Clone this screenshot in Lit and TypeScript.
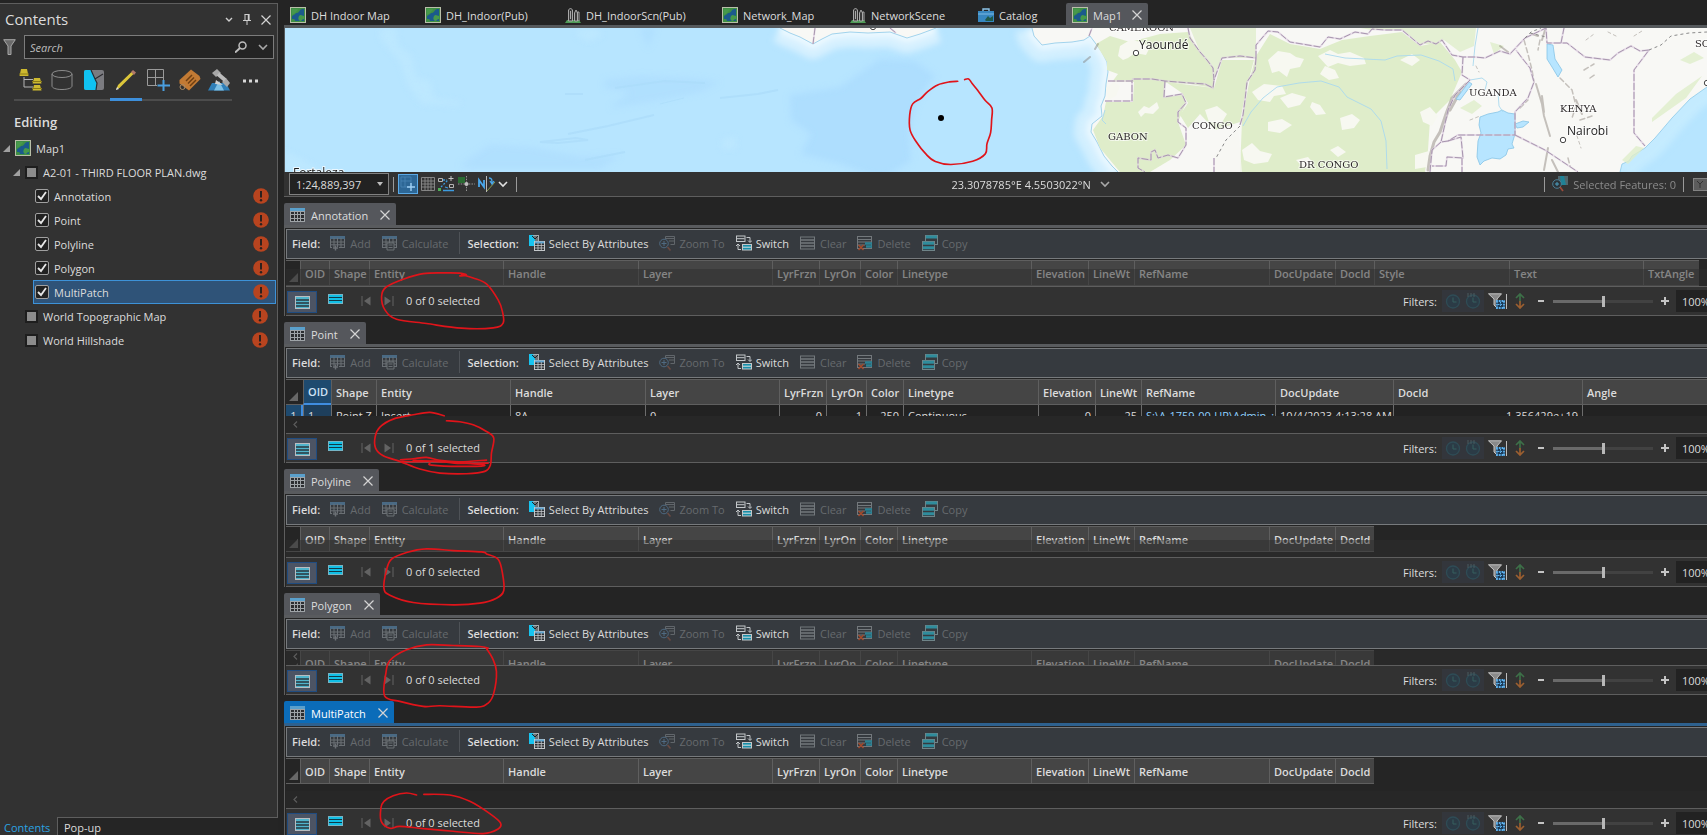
import { LitElement, html, svg, css, nothing, TemplateResult } from "lit";
import { customElement, property } from "lit/decorators.js";
import { classMap } from "lit/directives/class-map.js";
import { styleMap } from "lit/directives/style-map.js";

type Point = [number, number];

/** Smooth open curve through a list of points. */
function curve(flat: number[]): string {
  const p: Point[] = [];
  for (let i = 0; i < flat.length; i += 2) p.push([flat[i], flat[i + 1]]);
  let d = `M${p[0][0]} ${p[0][1]}`;
  for (let i = 0; i < p.length - 1; i++) {
    const a = p[Math.max(i - 1, 0)];
    const b = p[i];
    const c = p[i + 1];
    const e = p[Math.min(i + 2, p.length - 1)];
    const c1 = [b[0] + (c[0] - a[0]) / 6, b[1] + (c[1] - a[1]) / 6];
    const c2 = [c[0] - (e[0] - b[0]) / 6, c[1] - (e[1] - b[1]) / 6];
    d += `C${c1[0].toFixed(1)} ${c1[1].toFixed(1)} ${c2[0].toFixed(1)} ${c2[1].toFixed(1)} ${c[0]} ${c[1]}`;
  }
  return d;
}

const icon = (w: number, h: number, body: unknown) =>
  html`<svg width=${w} height=${h} viewBox="0 0 ${w} ${h}" fill="none" aria-hidden="true">${body}</svg>`;

const mapIcon = () => icon(16, 16, svg`
  <rect x=".5" y=".5" width="15" height="15" fill="#3f8f45" stroke="#b9bfa9"/>
  <path d="M2 9c3-1 3-3 5-3s2-3 5-4h2v12H5c0-2-1-2-3-2z" fill="#1b5a8c"/>
  <path d="M2 2h6c0 2-2 2-2 3S3 7 2 8zM9 9c2-2 3 0 5 0v3c-2 0-2 2-4 2-2-1-2-3-1-5z" fill="#47994b"/>`);

const sceneIcon = () => icon(16, 16, svg`
  <path d="M2 13h12l2 3H0z" fill="#4e9b57"/>
  <path d="M3.500 14V3l2-2 2 2v11zM9.500 14V6l1.500-3 1.500 3v8z" stroke="#a8a8a8" fill="#3a3a3a"/>
  <path d="M5.500 4v8M12.500 14V5h1.500v9" stroke="#a8a8a8"/>`);

const catalogIcon = () => icon(16, 14, svg`
  <path d="M5 3V1h6v2" stroke="#8cc3e8" stroke-width="1.400"/>
  <rect y="3" width="16" height="11" fill="#3787c0"/>
  <path d="M0 6h16" stroke="#7db9e2"/>
  <path d="M7 12l3-4 2 2 3-2v5H8z" fill="#1f5a4a"/>`);

const closeIcon = () => icon(10, 10, svg`<path d="M.5.5l9 9M9.500.5l-9 9" stroke="#d4d4d4" stroke-width="1.200"/>`);

const tableIcon = () => icon(15, 14, svg`
  <rect width="15" height="14" fill="#9ea3a7"/><rect width="15" height="3" fill="#5aa0cc"/>
  <path d="M1 4h3v2H1zM5 4h2v2H5zM8 4h2v2H8zM11 4h3v2h-3zM1 7h3v3H1zM5 7h2v3H5zM8 7h2v3H8zM11 7h3v3h-3zM1 11h3v2H1zM5 11h2v2H5zM8 11h2v2H8zM11 11h3v2h-3z" fill="#2c2e31"/>`);

const chevron = (c: string) => icon(10, 7, svg`<path d="M1 1l4 4 4-4" stroke=${c} stroke-width="1.600"/>`);

const gridGlyph = svg`
  <rect x=".5" y="1.500" width="14" height="11" stroke="#6b7075"/>
  <path d="M0 2.500h15" stroke="#4a6a84" stroke-width="3"/>
  <path d="M.5 7h14M.5 9.800h14M4 3v9.500M7.500 3v9.500M11 3v9.500" stroke="#6b7075"/>`;

const addIcon = () => icon(16, 16, svg`${gridGlyph}<path d="M2 12h7v4H2z" fill="#363a3f"/><path d="M5.500 10.500v5M3 13h5" stroke="#6b7075" stroke-width="1.500"/>`);
const calcIcon = () => icon(16, 16, svg`${gridGlyph}<path d="M5 8h7v7H5z" fill="#363a3f" stroke="#6b7075"/><path d="M6.500 10h4M6.500 12.500h4" stroke="#6b7075"/>`);

const selectAttrIcon = () => icon(16, 16, svg`
  <rect x=".5" y=".5" width="9" height="10" fill="#6f7377" stroke="#a9adb0"/>
  <path d="M0 0h4l2 5v6H0z" fill="#17c4f0"/>
  <path d="M3 1l3 3 3-3" stroke="#222"/>
  <rect x="5.500" y="6.500" width="10" height="9" fill="#2d3034" stroke="#c3c7ca"/>
  <path d="M6 7.500h9" stroke="#5fa3cf" stroke-width="2"/>
  <path d="M6 10.500h9M6 13h9M9 8v7M12.300 8v7" stroke="#c3c7ca" stroke-width=".8"/>`);

const zoomToIcon = () => icon(16, 16, svg`
  <path d="M6.500 4V1.500h9v8h-4" stroke="#61666b"/><path d="M7 3.500h8M10 6h5" stroke="#61666b"/>
  <circle cx="5" cy="8.500" r="4.300" stroke="#4f6a82" fill="#363a3f"/>
  <path d="M5 6v5M2.500 8.500h5" stroke="#4f6a82"/><path d="M8.500 12l3 3.500" stroke="#6b4a42" stroke-width="1.500"/>`);

const switchIcon = () => icon(16, 16, svg`
  <rect x=".5" y="1" width="8.500" height="5.500" stroke="#c3c7ca"/><path d="M1 3.700h7.500" stroke="#c3c7ca"/>
  <rect x="6.500" y="9.500" width="9" height="5.500" fill="#178ea8" stroke="#c3c7ca"/><path d="M7 12.200h8" stroke="#e0e0e0"/>
  <path d="M10.500 2.500H14v4.500M12 5.500l2 2 2-2M5 14.500H2V9.500M0 11l2-2 2 2" stroke="#c3c7ca"/>`);

const clearIcon = () => icon(16, 14, svg`<rect x=".5" y="1" width="14" height="12" stroke="#73787c"/><path d="M1 4h14M1 7h14M1 10h14" stroke="#73787c" stroke-width="1.400"/>`);

const deleteIcon = () => icon(16, 16, svg`<rect x=".5" y="1.500" width="14" height="12" stroke="#73787c"/>
  <path d="M1 4.500h14M1 7h14M1 10h7" stroke="#73787c" stroke-width="1.200"/><path d="M8 8.500h7M9 11.500h6" stroke="#2a8194" stroke-width="2.400"/>
  <path d="M1.500 10l5 5M6.500 10l-5 5" stroke="#a34a2c" stroke-width="1.500"/>`);

const copyIcon = () => icon(16, 16, svg`<rect x="3.500" y=".5" width="12" height="9" stroke="#6f8488"/><path d="M4 2h11" stroke="#2f8c9c" stroke-width="3"/>
  <rect x=".5" y="6.500" width="12" height="9" fill="#363a3f" stroke="#6f8488"/><path d="M1 8.300h11M1 12.700h11" stroke="#2f8c9c" stroke-width="3"/>`);

const allRowsIcon = () => icon(15, 13, svg`<rect x=".5" y=".5" width="14" height="12" fill="#50b4cc" stroke="#b8bcc0"/>
  <path d="M1 4h13M1 7h13M1 10h13" stroke="#27343c" stroke-width="1.500"/>`);
const selectedRowsIcon = () => icon(15, 10, svg`<rect x=".5" y=".5" width="14" height="9" fill="#10bfe6" stroke="#76b4c4"/>
  <path d="M1 3.500h13M1 6.500h13" stroke="#103a48"/>`);
const firstIcon = () => icon(10, 10, svg`<path d="M1 0v10" stroke="#636363"/><path d="M9.500.5v9L3 5z" fill="#636363"/>`);
const lastIcon = () => icon(10, 10, svg`<path d="M9 0v10" stroke="#636363"/><path d="M.5.5v9L7 5z" fill="#636363"/>`);

const clockIcon = (ticks: boolean) => icon(16, 16, svg`<circle cx="8" cy="8.500" r="6.500" fill="#2b3b46" stroke="#2f4c56" stroke-width="1.300"/>
  <path d="M8 4.500V9h3.500" stroke="#37605f"/>${ticks ? svg`<path d="M3 0v4M6 0v4M9 0v4" stroke="#4a5a5e"/>` : nothing}`);

const funnelGridIcon = () => icon(19, 16, svg`<path d="M.5.8h13L9 6v9l-3-3V6z" fill="#8a8a8a" stroke="#c4c4c4"/>
  <rect x="8" y="7" width="9" height="9" fill="#1c3c58"/>
  <path d="M8 8h9M8 15h9M9 8v8M16 8v8" stroke="#5fb0ea" stroke-width="1.800" stroke-dasharray="1.800 1"/>
  <path d="M12.500 9v5M10 11.500h5" stroke="#5fb0ea" stroke-dasharray="1.500 1"/>
  <path d="M18.500 1v15" stroke="#bdbdbd"/>`);

const rangeIcon = () => icon(10, 16, svg`<path d="M5 8V1.500M1 5l4-4 4 4" stroke="#3d7048" stroke-width="1.700"/>
  <path d="M5 8v6.500M1 11l4 4 4-4" stroke="#9c5f30" stroke-width="1.700"/>`);

const errorIcon = () => icon(16, 16, svg`<circle cx="8" cy="8" r="7.800" fill="#b8441f"/><path d="M8 3v6.500" stroke="#2c211e" stroke-width="2"/><circle cx="8" cy="12.200" r="1.200" fill="#2c211e"/>`);
const caretIcon = () => icon(7, 7, svg`<path d="M7 0v7H0z" fill="#a0a0a0"/>`);

/* Contents pane list modes */
const modeIcons: [string, () => TemplateResult][] = [
  ["List by drawing order", () => icon(23, 22, svg`
    <path d="M5 8v10h9M5 10.500h9" stroke="#b4b4b4"/>
    <path d="M2 0h6l1.500 7H.5zM15 9h6l1.500 5.500h-9zM15 16h6l1.500 5.500h-9z" fill="#cdb92f"/>
    <path d="M0 5h10M13 12.500h10M13 19.500h10" stroke="#8d7d18"/>`)],
  ["List by data source", () => icon(22, 20, svg`
    <path d="M1 4v12c0 2 4 3.500 10 3.500S21 18 21 16V4" stroke="#8c8c8c"/><ellipse cx="11" cy="4" rx="10" ry="3.500" stroke="#8c8c8c"/>`)],
  ["List by selection", () => icon(20, 20, svg`
    <rect width="20" height="20" rx="2" fill="#7b7b80"/><path d="M2 0h5l6 12-1 8H2a2 2 0 0 1-2-2V2a2 2 0 0 1 2-2z" fill="#10c2f2"/>
    <path d="M7 0l4 9 8-5M11 9l2 4-1 7" stroke="#2c2c30" stroke-width="1.200"/>`)],
  ["List by editing", () => icon(20, 20, svg`
    <path d="M0 20l2-5L15.500 2l2 2L4 17.500z" fill="#dcc63a"/><path d="M15 2l2-2 3 2.500L18 5z" fill="#b0786a"/>
    <path d="M0 20l1-3 2 2z" fill="#ddd"/>`)],
  ["List by snapping", () => icon(23, 22, svg`
    <path d="M.5.5h16v16H.5zM8.500.5v16M.5 8.500h16" stroke="#9a9a9a"/>
    <path d="M10 16.500h13M16.500 11v11" stroke="#323232" stroke-width="4"/>
    <path d="M10.500 16.500H23M16.500 11v11" stroke="#4a9fe0" stroke-width="2"/>`)],
  ["List by labeling", () => icon(22, 22, svg`
    <path d="M12 .5L20.500 7l1 3L10 21.500.5 14.500V11z" fill="#c27a34"/><path d="M7 12l6-6M9 14.500l6-6M11 17l6-6" stroke="#6f3f12" stroke-width="1.500"/>
    <circle cx="3.500" cy="18" r="2.500" stroke="#a88a66"/>`)],
  ["List by perspective imagery", () => icon(22, 22, svg`
    <path d="M4 14h14l4 7.500H0z" fill="#2f7fb8"/><path d="M11 12l5 9.500H6z" fill="#7cc0e6"/>
    <path d="M4 4l5-4 4 4-5 4zM14 13l4-4 4 5-3 4z" fill="#a6a6a6"/><path d="M8 11l7 5-8-1z" fill="#cfcfcf"/><path d="M10 5l7 6" stroke="#bcbcbc" stroke-width="4"/>`)],
];

interface Column { name: string; width: number; value?: string; align?: "right" | "link" }

const base: [string, number][] = [
  ["OID", 29], ["Shape", 40], ["Entity", 134], ["Handle", 135], ["Layer", 134], ["LyrFrzn", 47], ["LyrOn", 41], ["Color", 37],
  ["Linetype", 134], ["Elevation", 57], ["LineWt", 46], ["RefName", 135], ["DocUpdate", 66], ["DocId", 39],
];
const toColumns = (c: [string, number][]): Column[] => c.map(([name, width]) => ({ name, width }));
const baseColumns = toColumns(base);
const annotationColumns = toColumns([...base, ["Style", 135], ["Text", 134], ["TxtAngle", 56]]);
const pointColumns: Column[] = [
  { name: "OID", width: 28, value: "1" },
  { name: "Shape", width: 45, value: "Point Z" },
  { name: "Entity", width: 134, value: "Insert" },
  { name: "Handle", width: 135, value: "8A" },
  { name: "Layer", width: 134, value: "0" },
  { name: "LyrFrzn", width: 47, value: "0", align: "right" },
  { name: "LyrOn", width: 40, value: "1", align: "right" },
  { name: "Color", width: 37, value: "250", align: "right" },
  { name: "Linetype", width: 135, value: "Continuous" },
  { name: "Elevation", width: 57, value: "0", align: "right" },
  { name: "LineWt", width: 46, value: "25", align: "right" },
  { name: "RefName", width: 134, value: "S:\\A-1759-00-UP\\Admin_:", align: "link" },
  { name: "DocUpdate", width: 118, value: "10/4/2023 4:13:28 AM" },
  { name: "DocId", width: 189, value: "1.356429e+19", align: "right" },
  { name: "Angle", width: 134, value: "" },
];

interface TableView { name: string; columns: Column[]; height: number; overlap?: boolean; arrow?: boolean; total: number; active?: boolean; row?: boolean }
const tables: TableView[] = [
  { name: "Annotation", columns: annotationColumns, height: 26, overlap: true, total: 0 },
  { name: "Point", columns: pointColumns, height: 54, total: 1, arrow: true, row: true },
  { name: "Polyline", columns: baseColumns, height: 31, overlap: true, total: 0 },
  { name: "Polygon", columns: baseColumns, height: 15, overlap: true, total: 0, arrow: true },
  { name: "MultiPatch", columns: baseColumns, height: 50, total: 0, arrow: true, active: true },
];

const shared = css`
  * { box-sizing: border-box; }
  svg { display: block; flex: none; }
  button, select, input {
    font: inherit; color: inherit; background: none; border: 0; padding: 0; margin: 0; border-radius: 0; appearance: none; outline: 0;
  }
  button { display: flex; align-items: center; flex: none; white-space: nowrap; }
`;

@customElement("contents-pane")
class ContentsPane extends LitElement {
  static styles = [shared, css`
    :host { display: flex; flex-direction: column; width: 278px; flex: none; padding-top: 3px; color: #dcdcdc; }
    .pane { flex: 1; background: #323232; border: 1px solid #5e5e5e; border-left: 0; border-bottom: 0; display: flex; flex-direction: column; }
    header { display: flex; align-items: center; height: 31px; padding: 0 6px 0 5px; gap: 10px; }
    h1 { font-size: 15px; font-weight: 400; margin: 0; flex: 1; }
    .search { display: flex; align-items: center; gap: 8px; padding: 0 3px; }
    .box { flex: 1; display: flex; align-items: center; gap: 11px; height: 24px; padding: 0 5px; background: #242424; border: 1px solid #7c7c7c; }
    .box input { flex: 1; min-width: 0; font-style: italic; }
    .box input::placeholder { color: #bdbdbd; opacity: 1; }
    nav { display: flex; height: 42px; margin: 0 0 0 14px; }
    .mode { width: 32px; height: 42px; justify-content: center; border-bottom: 2px solid #4c4c4c; padding-top: 2px; }
    .mode:nth-child(7) { width: 26px; }
    .mode.on { border-bottom: 3px solid #3d8fdb; }
    .more { padding: 2px 11px 0; }
    h2 { font-size: 13px; font-weight: 600; margin: 0; padding: 9px 14px 0; height: 35px; line-height: 24px; }
    .row { display: flex; align-items: center; height: 24px; padding: 0 8px 0 2px; gap: 5px; border: 1px solid transparent; }
    .row > svg:last-child { margin-left: auto; }
    .l1 { padding-left: 12px; }
    .l1b { padding-left: 24px; }
    .l2 { margin-left: 33px; margin-right: 1px; padding: 0 6px 0 1px; }
    .selected { background: #2f5378; border-color: #3d92d8; }
    label { display: flex; align-items: center; gap: 5px; }
    .check { width: 14px; height: 14px; border: 1px solid #a0a0a0; border-radius: 2px; background: #222 center / 10px 10px no-repeat; display: block; }
    .check:checked { background-image: url("data:image/svg+xml,%3Csvg xmlns='http://www.w3.org/2000/svg' viewBox='0 0 10 10'%3E%3Cpath d='M1 5l3 3 5-7' fill='none' stroke='%23e6e6e6' stroke-width='1.800'/%3E%3C/svg%3E"); }
    .part { width: 13px; height: 13px; border: 2px solid #1e1e1e; background: #8c8c8c; }
    .foot { display: flex; height: 18px; align-items: center; background: #323232; }
    .foot button { height: 18px; padding: 2px 5px 0 4px; color: #2ba3e3; width: 57px; }
    .foot .pop { flex: 1; color: #dcdcdc; border: 1px solid #5e5e5e; border-width: 1px 0 0 1px; background: #252525; padding-left: 6px; }
  `];

  render() {
    return html`
      <div class="pane">
        <header>
          <h1>Contents</h1>
          <button aria-label="Options">${icon(8, 6, svg`<path d="M1 1l3 3 3-3" stroke="#cfcfcf" stroke-width="1.400"/>`)}</button>
          <button aria-label="Auto hide">${icon(8, 11, svg`<path d="M1.500.5h5M2 .5v6M6 .5v6M0 6.500h8M4 7v4" stroke="#cfcfcf"/><path d="M5.500 1v5" stroke="#cfcfcf" stroke-width="1.500"/>`)}</button>
          <button aria-label="Close">${closeIcon()}</button>
        </header>
        <div class="search">
          <button aria-label="Filter">${icon(13, 16, svg`<path d="M.7.7h11.600L8 7v8.500H5V7z" fill="#6a6a6a" stroke="#a8a8a8"/>`)}</button>
          <div class="box">
            <input type="text" placeholder="Search" aria-label="Search" />
            <button aria-label="Search">${icon(12, 12, svg`<circle cx="7.500" cy="4.500" r="3.500" stroke="#bdbdbd" stroke-width="1.500"/><path d="M5 7l-5 4.500" stroke="#bdbdbd" stroke-width="2"/>`)}</button>
            <button aria-label="Search options">${chevron("#a8a8a8")}</button>
          </div>
        </div>
        <nav>
          ${modeIcons.map(([label, draw], i) => html`<button class=${classMap({ mode: true, on: i === 3 })} aria-label=${label}>${draw()}</button>`)}
          <button class="more" aria-label="More">${icon(16, 4, svg`<path d="M0 .5h3v3H0zM6 .5h3v3H6zM12 .5h3v3h-3z" fill="#d8d8d8"/>`)}</button>
        </nav>
        <h2>Editing</h2>
        <div class="row">${caretIcon()}${mapIcon()}<span>Map1</span></div>
        <div class="row l1">${caretIcon()}<label><input type="checkbox" class="part" />A2-01 - THIRD FLOOR PLAN.dwg</label></div>
        ${["Annotation", "Point", "Polyline", "Polygon", "MultiPatch"].map((n) => html`
          <div class=${classMap({ row: true, l2: true, selected: n === "MultiPatch" })}>
            <label><input type="checkbox" class="check" checked />${n}</label>${errorIcon()}
          </div>`)}
        ${["World Topographic Map", "World Hillshade"].map((n) => html`
          <div class="row l1b"><label><input type="checkbox" class="part" />${n}</label>${errorIcon()}</div>`)}
      </div>
      <div class="foot"><button>Contents</button><button class="pop">Pop-up</button></div>
    `;
  }
}

@customElement("map-view")
class MapView extends LitElement {
  static styles = [shared, css`
    :host { display: block; color: #dcdcdc; }
    .tabs { display: flex; align-items: flex-end; height: 25px; padding-left: 6px; }
    .tab { display: flex; align-items: center; gap: 5px; height: 22px; padding-top: 2px; flex: none; }
    .open { background: #55575c; padding: 2px 6px 0; border-radius: 2px 2px 0 0; }
    .open .x { margin-left: 5px; }
    .frame { border-top: 3px solid #55595c; border-left: 1px solid #55595c; }
    .map { width: 100%; height: 144px; }
    .land { font-family: "DejaVu Serif", serif; font-size: 10px; fill: #2c2829; stroke: #fff; stroke-width: 2px; paint-order: stroke; stroke-opacity: .6; }
    .city { font-family: "Open Sans", sans-serif; font-size: 12px; fill: #1c1c1c; stroke: #fff; stroke-width: 2px; paint-order: stroke; stroke-opacity: .7; }
    .status { display: flex; align-items: center; height: 25px; padding: 0 0 0 5px; background: #323232; border-bottom: 1px solid #5e5e5e; }
    .scale { display: flex; align-items: center; }
    .scale select { width: 100px; height: 22px; padding: 0 6px; background: #222; border: 1px solid #808080; }
    .scale svg { margin: 0 6px 0 -12px; pointer-events: none; position: relative; }
    .bar { width: 1px; height: 15px; background: #9a9a9a; flex: none; }
    .tools { display: flex; align-items: center; gap: 3px; margin: 0 8px 0 4px; }
    .on { background: #2d6796; border: 1px solid #5aa9e6; width: 20px; height: 20px; justify-content: center; margin-left: 1px; }
    .coords { display: flex; align-items: center; gap: 9px; margin: 0 auto; }
    .features { display: flex; align-items: center; gap: 4px; margin: 0 7px; color: #8b8b8b; }
    .pause { margin: 0 0 0 9px; width: 14px; overflow: hidden; }
  `];

  render() {
    const tabs: [string, number, () => TemplateResult][] = [
      ["DH Indoor Map", 135, mapIcon], ["DH_Indoor(Pub)", 140, mapIcon], ["DH_IndoorScn(Pub)", 157, sceneIcon],
      ["Network_Map", 128, mapIcon], ["NetworkScene", 128, sceneIcon], ["Catalog", 88, catalogIcon],
    ];
    return html`
      <div class="tabs">
        ${tabs.map(([name, width, draw]) => html`<button class="tab" style=${styleMap({ width: `${width}px` })}>${draw()}<span>${name}</span></button>`)}
        <div class="tab open">${mapIcon()}<span>Map1</span><button class="x" aria-label="Close Map1">${closeIcon()}</button></div>
      </div>
      <div class="frame">${this.map()}</div>
      <div class="status">
        <label class="scale"><select aria-label="Map scale"><option>1:24,889,397</option></select>
          ${icon(6, 4, svg`<path d="M0 0h6L3 4z" fill="#bdbdbd"/>`)}</label>
        <div class="tools">
          <i class="bar"></i>
          <button class="on" aria-label="Constraint">${icon(16, 16, svg`<path d="M1 1h10v10H1zM1 5h10M5 1v10" stroke="#4a86b5" stroke-width=".8"/><path d="M7 11h8M11 7v8" stroke="#9fd0f5" stroke-width="1.400"/>`)}</button>
          <button aria-label="Grid">${icon(14, 14, svg`<path d="M.5.5h13v13H.5zM4 0v14M7 0v14M10 0v14M0 4h14M0 7h14M0 10h14" stroke="#8c8c8c" stroke-width=".9"/>`)}</button>
          <button aria-label="Snapping">${icon(17, 16, svg`<path d="M.5 2.500h4v3h-4zM11.500 8.500h4v3h-4z" stroke="#b4b4b4"/><path d="M13 0v5M10.500 2.500h5" stroke="#c4c4c4"/><path d="M5 4h4M3 11l7-7" stroke="#3d9be0" stroke-width="1.300" stroke-dasharray="2 1.500"/><path d="M5 14.500h11M7 11l3 1" stroke="#3d9be0" stroke-width="1.300"/><rect y="12" width="3" height="3" fill="#4fae56"/>`)}</button>
          <button aria-label="Inference">${icon(17, 16, svg`<rect width="7" height="6" y="1" fill="#2a6b32"/><path d="M0 8h17M8.500 0v16" stroke="#949494" stroke-dasharray="1.500 1.200"/><circle cx="8.500" cy="8" r="2" fill="#c0c0c0"/>`)}</button>
          <button aria-label="Ground to grid">${icon(17, 16, svg`<path d="M1 11V4l5 7V4" stroke="#49a7ea" stroke-width="1.800"/><path d="M8.500 0v16" stroke="#b8b8b8"/><path d="M9 15l8-9" stroke="#8a9a50"/><path d="M11 2c3 0 3 2 3 5M12 5l2 3 2-3" stroke="#49a7ea" stroke-width="1.300"/>`)}</button>
          <button aria-label="More tools">${chevron("#e0e0e0")}</button>
        </div>
        <i class="bar"></i>
        <button class="coords"><span>23.3078785°E 4.5503022°N</span>${chevron("#a8a8a8")}</button>
        <i class="bar"></i>
        <button class="features">${icon(17, 16, svg`<path d="M6 0h10v9H6z" fill="#50666c"/><path d="M8 0h4l2 9h-5z" fill="#1f8296"/><circle cx="5" cy="8" r="4.300" stroke="#4d7f95" fill="#2b3338"/><path d="M5 6v4M3 8h4" stroke="#4d9fc0"/><path d="M8 11l3 4" stroke="#9c4b3a" stroke-width="1.700"/>`)}<span>Selected Features: 0</span></button>
        <i class="bar"></i>
        <button class="pause" aria-label="Pause drawing">${icon(14, 13, svg`<rect x=".5" y=".5" width="14" height="12" fill="#5c5c5c" stroke="#848484"/><path d="M4 3l3 3v4M10 3L7 6" stroke="#333"/>`)}</button>
      </div>
    `;
  }

  map() {
    const coast = "M1032 28L1034 36L1042 45L1055 43L1072 42L1084 40L1090 36L1096 44L1102 52L1107 62L1108 72L1106 84L1105 96L1101 106L1102 116L1092 124L1091 132L1097 142L1104 156L1112 166L1118 172";
    const east = "M1707 87L1690 99L1672 118L1655 138L1645 148L1632 156L1629 161L1622 164L1620 172";
    const gulf = "M780 28L790 33L800 37L813 44L822 39L832 34L850 32L868 33L890 32L907 38L920 34L936 28";
    const borders = [
      "M1188 28L1190 38L1200 52L1207 60L1213 68L1214 80L1222 58L1240 56L1256 58",
      "M1256 58V45L1268 31L1278 32L1290 42L1320 47L1328 37L1340 39L1355 32L1368 34L1372 29L1385 30L1402 30L1420 45L1428 41L1436 44L1442 40L1452 55L1463 57L1475 57L1485 58L1500 51L1510 54L1525 38",
      "M1256 58L1255 70L1247 82L1245 100L1243 115L1240 125",
      "M1108 81H1132L1133 79L1152 79L1165 81L1190 83L1205 84L1213 88L1214 80M1105 101H1132V81M1165 81L1164 97L1182 94L1186 103L1178 112L1178 122L1186 128V145L1178 158L1168 155L1158 158L1155 150L1151 152L1151 160L1138 158L1138 168L1145 172",
      "M1463 57L1462 75L1470 80L1455 95L1448 110L1441 142L1448 141L1458 135H1515V112L1528 98L1534 82L1530 68L1522 58L1516 50",
      "M1515 135L1545 150L1578 172M1525 38L1546 28L1547 43L1567 43L1585 57L1610 60L1618 53L1631 46L1640 51L1649 50L1634 70V133L1645 146M1561 43L1564 28",
      "M1441 142L1432 150L1430 172M1448 141L1461 137L1463 158L1447 157L1446 166L1432 166M1462 158L1462 172",
      "M813 44L815 28M890 28L896 33M1089 36L1092 28", "M1214 158L1214 172",
    ];
    const clearings = "M1138 112l6-6 5 2 8-6 2 6-6 6-8-1-4 4zM1120 46l10-6 12 2 8 5-4 8-11-2-7 5-5 2-5-4zM1106 88l8-6 6 4-4 10-8 4zM1268 60l10-9 12 2 6 4 8 2-4 8-10 2-3 8-8-6-7 2zM1318 56l12-6 8 4 12-2 14 6 2 6-16 2-12-3-10 4zM1325 66l10 4 4 8-10 2-9-6zM1252 92l12-8 18 2 4 8-12 2-4 6-12-2zM1280 98l12-5 14 4-6 8-12 3zM1312 102l8 3 6 9-10 1-6-8zM1340 118l12-4 8 6-6 8-12 2zM1268 122l14-3 10 6-12 8-12-2zM1242 150l10-7 8 8 12 3-4 8-14 2-10-4zM1400 60l12-6 8 6-8 6zM1420 112l10-5 8 9-6 10-9-4zM1415 155l14-4-2 16-12 2zM1330 150l8-4 8 6-8 5zM1296 160l12-3 6 7-10 4zM1205 110l12-4 10 8-6 10-12-2z";
    return html`<svg class="map" viewBox="285 28 1422 144" preserveAspectRatio="xMinYMid slice" role="img" aria-label="Map">
      <defs><filter id="soft" x="-20%" y="-20%" width="140%" height="140%"><feGaussianBlur stdDeviation="3" /></filter></defs>
      <rect x="285" y="28" width="1422" height="144" fill="#b7e5ff" />
      <g fill="#abdcfe" filter="url(#soft)">
        <path d="M790 95l50-8 40-28 35 2 20 15-18 25-8 30 2 30-30 18-40-15-40-10 10-20-20-14z" opacity=".8" />
        <path d="M605 80l35-4 50 2 30 4-20 10-40 8-50 8 20-16-25-4zM460 165l30-20 40 2 50 10 40-2-20 14H470zM640 28h16l-8 20z" opacity=".6" />
      </g>
      <g fill="#bfe9ff" opacity=".7" filter="url(#soft)"><path d="M380 28h16l2 18 14 10 4 22 14 2 4 18 28 4-4 4-36-2-14-18-8-24-12-14-8-10zM576 30l22-2 4 8-14 6-10-6zM285 150l18 10 20 12h-38zM722 139l14-2v12h-14z" /></g>
      <g stroke="#abdcfa" opacity=".7" fill="none"><path d="M568 134l40-8 46-11M540 142l36-4 12 2-30 3zM565 94h18M615 88l50-7 40 2M720 98l38-4 20-4M585 160l40-8" stroke-width="2" /><path d="M660 104l24-6" /></g>
      <g fill="none" stroke-linejoin="round" filter="url(#soft)">
        <path d=${coast} stroke="#d2efff" stroke-width="34" /><path d=${east} stroke="#c4ebff" stroke-width="30" />
        <path d=${gulf} stroke="#d6f0ff" stroke-width="30" /><path d=${coast} stroke="#eaf8ff" stroke-width="10" /><path d=${gulf} stroke="#effaff" stroke-width="8" />
      </g>
      <path d=${gulf + "V20H780Z"} fill="#f8f8f5" />
      <path d=${coast + "L1118 176H1620V172L1622 164L1629 161L1632 156L1645 148L1655 138L1672 118L1690 99L1707 87V20H1032Z"} fill="#f8f8f5" />
      <path d=${coast} stroke="#8dc9e8" stroke-width=".8" fill="none" /><path d=${gulf} stroke="#8dc9e8" stroke-width=".8" fill="none" /><path d=${east} stroke="#8dc9e8" stroke-width=".8" fill="none" />
      <g fill="#dfedca">
        <path d="M1096 44L1110 36L1130 42L1160 34L1188 32L1200 52L1213 68L1214 88L1190 84L1152 82H1112L1118 74L1107 70V62z" />
        <path d="M1190 28H1256V58L1222 58L1214 78L1213 68L1200 52z" opacity=".75" />
        <path d="M1106 102H1133L1134 82L1165 82L1164 97L1182 95L1186 103L1178 122L1186 145L1170 160L1150 172H1120L1100 148L1093 130L1103 116z" />
        <path d="M1166 82L1214 88L1222 60L1254 60L1246 90L1240 122L1215 130L1200 114L1188 128L1180 115L1188 103L1182 93z" />
        <path d="M1256 56L1270 34L1290 44L1320 49L1342 40L1370 36L1402 32L1420 46L1440 42L1455 60L1462 72L1450 100L1430 120L1428 150L1425 172H1240L1242 120L1250 78z" />
        <path d="M1360 28H1476L1474 46L1460 52L1444 40L1436 44L1420 44L1402 30H1372zM1460 108l14-8 8 6-10 8zM1680 60l14-8 10 6-14 6zM1652 118l24-24 26-18-16 22-34 24zM1622 160l14-14 8 2-8 8-8 8zM1490 42l14 4-10 8z" opacity=".8" />
      </g>
      <path d=${clearings} fill="#f7f8f1" />
      <path d="M1214 172v-16l24-28 4 44z" fill="#f6f6f2" opacity=".8" />
      <g fill="none" stroke="#786e66" stroke-linecap="round" opacity=".4">
        <path d="M1466 84l-14 14-6 16-6 18-6 10-4 14-2 14M1460 92l-10 18M1449 108l-4 12" stroke-width="3" />
        <path d="M1536 84l6 20 2 12 6 20M1542 96l2 16M1548 148l-4 22" stroke-width="2" />
        <path d="M1524 40l4 14 4 16 2 12M1560 78l12 12 4 16-4 12M1540 40l-2 10M1580 120l12-4M1520 108l8-8M1568 158l2 8M1584 70l10-6M1590 78l6-4" stroke-width="1.500" stroke-dasharray="5 3" />
        <path d="M1500 46l8 6M1545 30l-3 10M1532 34l6 2M1552 160l6 12M1098 44l-3 5M1090 57l-6 5M1576 100l6 14" stroke-width="2" />
        <path d="M1575 130l6 18M1586 40l8-6M1608 32l8 4M1634 36l8-5M1470 120l10-4M1476 66l3 6" stroke-width="1" stroke-dasharray="3 3" />
      </g>
      <g fill="#b7e5ff" stroke="#86c4e6" stroke-width=".8">
        <path d="M1480 117l8-3 10-2 4-2 6 3 7 1v20l-3 10 2 4-6 1-2 6-6 4-8-1-8 3-4 4-3-8 1-16 3-8-2-8z" />
        <path d="M1515 124l8-3 6 1-6 5-6 1zM1547 44l6 1 2 14 7 11-4 7-6-10-5-8zM1456 99l13-17 3 2-12 16z" />
      </g>
      <g fill="none" stroke="#a9d9ee" stroke-width=".9">
        <path d="M1243 126l8-14 12-14 14-11 22-4 22-2 18 6 8 10 24 12 10 12 5 20 1 28" />
        <path d="M1325 54l20 4 40 2 12-4 24-1 18 6 14 8 2 12M1470 80l12-2 5 4-2 8M1498 92l1 14 4 6M1478 28l-3 18-2 20M1105 110l-3 10 4 4" />
      </g>
      <g fill="none" stroke="#dccbe0" stroke-width="2" opacity=".6">${borders.map((d) => svg`<path d=${d} />`)}</g>
      <g fill="none" stroke="#a796ae" stroke-dasharray="7 2">${borders.map((d) => svg`<path d=${d} />`)}</g>
      <path d="M1649 50l12-5 10-9 18-3 18-1M1525 38l6-6 10-4M1240 126l-14 14-10 18M1530 33l16 4" stroke="#8a8a8a" stroke-dasharray="3 3" fill="none" />
      <g class="land">
        <text x="1109" y="31">CAMEROON</text><text x="1108" y="140">GABON</text><text x="1192" y="129">CONGO</text>
        <text x="1299" y="168">DR CONGO</text><text x="1469" y="96">UGANDA</text><text x="1560" y="112">KENYA</text><text x="1695" y="47">SO</text>
      </g>
      <g class="city"><text x="1139" y="49">Yaoundé</text><text x="1567" y="135">Nairobi</text><text x="293" y="177">Fortaleza</text></g>
      <g fill="#fff" stroke="#444"><circle cx="1136" cy="53" r="2.700" /><circle cx="1563" cy="140" r="2.700" /><circle cx="1707" cy="83" r="2.700" /><circle cx="873" cy="27" r="2.700" /></g>
      <circle cx="941" cy="118" r="3" fill="#000" />
    </svg>`;
  }
}

@customElement("table-dock")
class TableDock extends LitElement {
  @property({ attribute: false }) view!: TableView;

  static styles = [shared, css`
    :host { display: block; color: #dcdcdc; }
    .tab { display: inline-flex; align-items: center; gap: 6px; height: 22px; padding: 2px 6px 0; background: #55575c; border-radius: 2px 2px 0 0; vertical-align: top; }
    .tab button { margin-left: 6px; }
    .body { border-left: 1px solid #5e5e5e; border-top: 3px solid #595b5e; padding: 1px 0 0 1px; }
    .active .tab { background: #0b6cb9; color: #fff; }
    .active .body { border-top-color: #2e618f; }
    .bar { display: flex; align-items: center; height: 30px; background: #363a3f; border: 1px solid #777a7d; border-right: 0; padding: 0 0 2px 5px; gap: 11px; margin-bottom: 1px; }
    .bar button { gap: 4px; }
    .bar b { font-weight: 600; }
    .bar button:disabled { color: #666a6e; }
    .bar i { width: 1px; height: 22px; background: #4e5257; }
    .bar b + button { margin-left: -1px; }
    .bar i + b { margin-left: -4px; }
    .grid { position: relative; display: flex; flex-direction: column; overflow: hidden; background: #252525; }
    .rows { flex: 1; min-height: 0; overflow: hidden; }
    table { border-collapse: separate; border-spacing: 0; table-layout: fixed; width: 0; }
    th { height: 26px; padding: 0 0 0 4px; text-align: left; font-weight: 600; white-space: nowrap; overflow: hidden; background: #454545; border: 1px solid #5f5f5f; border-width: 1px 0 1px 1px; }
    th.corner { background: #252525; border-left: 0; vertical-align: bottom; padding: 0 0 3px 3px; }
    th.key { background: #1e4a6f; color: #cfe3f5; border-bottom: 2px solid #3f8de0; }
    td { height: 21px; padding: 0 4px; white-space: nowrap; overflow: hidden; border-left: 1px solid #6c6c6c; background: #222; }
    td.num { background: #1e4a6f; padding: 0; text-align: center; border-left: 0; border-right: 2px solid #3f8de0; }
    td.key { background: #1e3f5c; }
    td.right { text-align: right; }
    td a { color: #8fd0ff; text-decoration: none; }
    .scroll { flex: none; height: 17px; background: #272727; color: #6b6b6b; display: flex; align-items: center; padding-left: 7px; }
    .overlap .scroll { position: absolute; left: 0; right: 0; bottom: 0; background: rgba(46, 46, 46, .5); }
    .foot { display: flex; align-items: center; height: 30px; background: #323232; border: 1px solid #5e5e5e; border-width: 1px 0; overflow: hidden; }
    .all { width: 30px; height: 22px; justify-content: center; background: #4c5464; border: 1px solid #204c80; margin: 2px 0 0 1px; }
    .sel { margin: 0 18px 5px 11px; }
    .prev { margin-right: 13px; }
    .count { margin-left: 12px; padding-bottom: 2px; }
    .filters { display: flex; align-items: center; margin-left: auto; }
    .time { display: flex; gap: 4px; margin: 0 4px 0 5px; padding: 3px 3px; background: #33363c; }
    .range { margin: 0 12px 0 8px; }
    .op { width: 8px; justify-content: center; }
    input[type="range"] { width: 100px; height: 12px; margin: 0 8px; background: linear-gradient(#6a6a6a, #6a6a6a) left center / 50% 3px no-repeat, linear-gradient(#424242, #424242) left center / 100% 3px no-repeat; }
    input[type="range"]::-webkit-slider-thumb { appearance: none; width: 3px; height: 11px; background: #b8b8b8; }
    .pct { width: 31px; height: 22px; background: #222; padding-left: 6px; margin-left: 7px; }
  `];

  render() {
    const v = this.view;
    const first = v.columns[0];
    return html`<section class=${classMap({ active: !!v.active })}>
      <div class="tab">${tableIcon()}<span>${v.name}</span><button aria-label="Close ${v.name}">${closeIcon()}</button></div>
      <div class="body">
        <div class="bar">
          <b>Field:</b>
          <button disabled>${addIcon()}Add</button>
          <button disabled>${calcIcon()}Calculate</button>
          <i></i><b>Selection:</b>
          <button>${selectAttrIcon()}Select By Attributes</button>
          <button disabled>${zoomToIcon()}Zoom To</button>
          <button>${switchIcon()}Switch</button>
          <button disabled>${clearIcon()}Clear</button>
          <button disabled>${deleteIcon()}Delete</button>
          <button disabled>${copyIcon()}Copy</button>
        </div>
        <div class=${classMap({ grid: true, overlap: !!v.overlap })} style=${styleMap({ height: `${v.height}px` })}>
          <div class="rows">
            <table>
              <colgroup>
                <col style=${styleMap({ width: v.row ? "17px" : "14px" })} />
                ${v.columns.map((c) => html`<col style=${styleMap({ width: `${c.width}px` })} />`)}
              </colgroup>
              <thead><tr>
                <th class="corner">${icon(9, 9, svg`<path d="M9 0v9H0z" fill="#686868"/>`)}</th>
                ${v.columns.map((c) => html`<th class=${classMap({ key: !!v.row && c === first })}>${c.name}</th>`)}
              </tr></thead>
              ${v.row ? html`<tbody><tr><td class="num">1</td>${v.columns.map((c) => html`
                <td class=${classMap({ right: c.align === "right", key: c === first })}>${c.align === "link" ? html`<a href="#">${c.value}</a>` : c.value}</td>`)}</tr></tbody>` : nothing}
            </table>
          </div>
          <div class="scroll">${v.arrow ? icon(5, 7, svg`<path d="M4 .5l-3 3 3 3" stroke="#5c5c5c" stroke-width="1.200"/>`) : nothing}</div>
        </div>
        <div class="foot">
          <button class="all" aria-label="Show all records">${allRowsIcon()}</button>
          <button class="sel" aria-label="Show selected records">${selectedRowsIcon()}</button>
          <button class="prev" aria-label="First record">${firstIcon()}</button>
          <button aria-label="Last record">${lastIcon()}</button>
          <span class="count">0 of ${v.total} selected</span>
          <div class="filters">
            <span>Filters:</span>
            <span class="time">${clockIcon(false)}${clockIcon(true)}</span>
            <button aria-label="Filter by extent">${funnelGridIcon()}</button>
            <button class="range" aria-label="Filter by range">${rangeIcon()}</button>
            <button class="op" aria-label="Zoom out">${icon(6, 2, svg`<path d="M0 1h6" stroke="#c4c4c4" stroke-width="2"/>`)}</button>
            <input type="range" aria-label="Table zoom" min="0" max="100" value="50" />
            <button class="op" aria-label="Zoom in">${icon(8, 8, svg`<path d="M0 4h8M4 0v8" stroke="#c4c4c4" stroke-width="2"/>`)}</button>
            <input class="pct" type="text" aria-label="Zoom level" value="100%" />
          </div>
        </div>
      </div>
    </section>`;
  }
}

const redMarks: { y: number; strokes: number[][] }[] = [
  { y: 0, strokes: [[2035, 244, 2010, 246, 1975, 255, 1945, 275, 1925, 295, 1900, 312, 1891, 345, 1892, 390, 1910, 425, 1940, 463, 1968, 485, 2015, 494, 2080, 484, 2118, 462, 2123, 432, 2134, 398, 2137, 360, 2138, 324, 2118, 302, 2095, 271, 2078, 250, 2068, 237, 2056, 239]] },
  { y: 200, strokes: [
    [540, 228, 560, 226, 545, 220, 500, 219, 430, 221, 370, 238, 318, 262, 305, 290, 315, 330, 350, 358, 440, 371, 545, 385, 640, 384, 670, 370, 668, 335, 655, 300, 620, 252, 580, 234, 545, 224],
    [493, 648, 450, 638, 400, 645, 340, 658, 300, 682, 286, 710, 287, 745, 310, 768, 360, 785, 420, 808, 480, 820, 560, 822, 615, 815, 632, 795, 635, 760, 642, 715, 620, 695, 580, 675, 540, 666, 500, 663],
    [362, 780, 400, 777, 440, 773, 480, 782, 540, 786, 620, 781], [366, 785, 420, 786, 470, 784, 540, 791, 625, 790], [450, 790, 455, 796, 540, 800, 615, 797, 560, 790, 400, 782]] },
  { y: 460, strokes: [
    [620, 282, 605, 276, 520, 272, 440, 267, 380, 278, 335, 298, 320, 330, 312, 385, 330, 406, 400, 428, 520, 435, 600, 430, 650, 415, 672, 392, 668, 340, 655, 298, 620, 282],
    [625, 565, 600, 560, 520, 557, 440, 555, 380, 570, 330, 602, 318, 640, 314, 708, 360, 725, 430, 740, 480, 738, 590, 742, 625, 730, 642, 700, 650, 635, 638, 595, 620, 566],
    [410, 1006, 380, 1000, 340, 1008, 312, 1025, 303, 1045, 304, 1085, 330, 1106, 360, 1100, 430, 1107, 520, 1115, 610, 1122, 655, 1108, 662, 1090, 630, 1062, 570, 1025, 510, 1006, 432, 1004]] },
];

@customElement("app-root")
class AppRoot extends LitElement {
  static styles = [shared, css`
    :host { display: flex; position: relative; height: 100vh; overflow: hidden; gap: 6px; background: #242424; font: 11px/15px "Open Sans", "Noto Sans", sans-serif; }
    main { flex: 1; min-width: 0; display: flex; flex-direction: column; gap: 6px; overflow: hidden; }
    .ink { position: absolute; left: 0; top: 0; width: 100%; height: 100%; pointer-events: none; }
  `];

  render() {
    return html`
      <contents-pane></contents-pane>
      <main>
        <map-view></map-view>
        ${tables.map((t) => html`<table-dock .view=${t}></table-dock>`)}
      </main>
      <svg class="ink" fill="none" stroke="#e0141a" stroke-width="5" stroke-linecap="round" stroke-linejoin="round" aria-hidden="true">
        ${redMarks.map((m) => svg`<g transform="translate(280 ${m.y}) scale(0.333)">${m.strokes.map((s) => svg`<path d=${curve(s)} />`)}</g>`)}
      </svg>
    `;
  }
}
